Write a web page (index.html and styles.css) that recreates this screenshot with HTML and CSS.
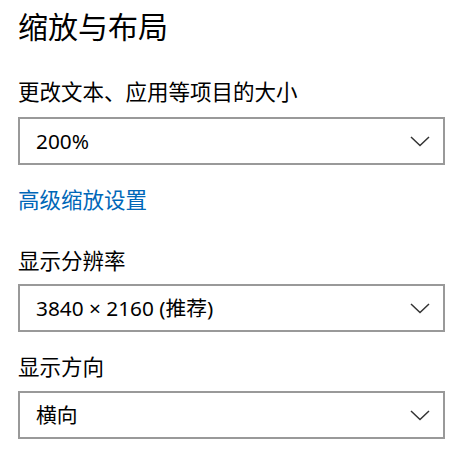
FILE: index.html
```html
<!DOCTYPE html>
<html lang="zh-CN">
<head>
<meta charset="utf-8">
<link rel="stylesheet" href="styles.css">
</head>
<body>
<main class="page">
  <h1 class="title">缩放与布局</h1>
  <div class="label l1">更改文本、应用等项目的大小</div>
  <div class="combo c1"><span class="value">200%</span><svg class="chev" width="20" height="11" viewBox="0 0 20 11"><path d="M1 1 L10 9.5 L19 1" fill="none" stroke="#333" stroke-width="1.5"/></svg></div>
  <a class="link" href="#">高级缩放设置</a>
  <div class="label l2">显示分辨率</div>
  <div class="combo c2"><span class="value">3840 × 2160 (推荐)</span><svg class="chev" width="20" height="11" viewBox="0 0 20 11"><path d="M1 1 L10 9.5 L19 1" fill="none" stroke="#333" stroke-width="1.5"/></svg></div>
  <div class="label l3">显示方向</div>
  <div class="combo c3"><span class="value">横向</span><svg class="chev" width="20" height="11" viewBox="0 0 20 11"><path d="M1 1 L10 9.5 L19 1" fill="none" stroke="#333" stroke-width="1.5"/></svg></div>
</main>
</body>
</html>
```
FILE: styles.css
```css
html, body {
  margin: 0;
  padding: 0;
  background: #ffffff;
}
body {
  font-family: "Noto Sans", "Noto Sans CJK SC", sans-serif;
  color: #000000;
}
.page {
  padding: 5px 29px 0 18px;
  display: flex;
  flex-direction: column;
  align-items: stretch;
}
.title {
  margin: 0;
  font-family: "Noto Sans CJK SC", sans-serif;
  font-weight: 400;
  font-size: 30px;
  line-height: 40px;
}
.label {
  font-family: "Noto Sans CJK SC", sans-serif;
  font-size: 21.5px;
  line-height: 30px;
}
.l1 { margin-top: 31px; }
.l2 { margin-top: 31px; }
.l3 { margin-top: 19px; }
.combo {
  box-sizing: border-box;
  height: 48px;
  border: 2px solid #999999;
  display: flex;
  align-items: center;
  justify-content: space-between;
  padding: 0 13px 0 16px;
  margin-top: 11px;
}
.c2 { margin-top: 9px; }
.c3 { margin-top: 10px; }
.value {
  font-size: 20.8px;
  line-height: 28px;
}
.chev {
  display: block;
}
.link {
  margin-top: 19px;
  font-family: "Noto Sans CJK SC", sans-serif;
  font-size: 21.5px;
  line-height: 30px;
  color: #0067b8;
  text-decoration: none;
  align-self: flex-start;
}
```
